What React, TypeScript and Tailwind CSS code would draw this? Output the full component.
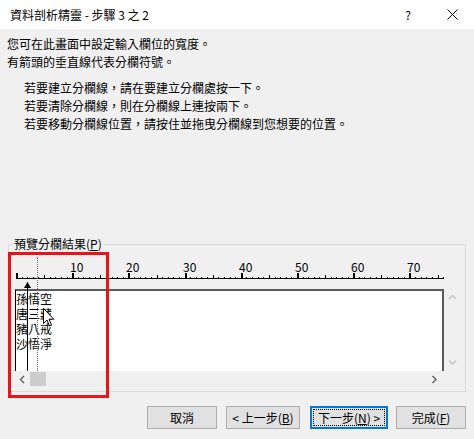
import React from 'react';

const FONT = { fontFamily: '"Noto Sans CJK TC", "Noto Sans", sans-serif' };

function Ruler() {
    const cols = Array.from({ length: 77 }, (_, i) => i);
    const px = (c: number) => Math.round(1 + c * 5.62);
    return (
        <svg width="432" height="31" className="block" style={FONT}>
            <line x1="1" y1="20.5" x2="429" y2="20.5" stroke="#000" strokeWidth="1" />
            {cols.map((c) => {
                const x = px(c);
                if (c % 10 === 0) return <rect key={c} x={x} y={15} width={2} height={5} fill="#000" />;
                if (c % 5 === 0) return <rect key={c} x={x} y={17} width={1} height={3} fill="#000" />;
                return <rect key={c} x={x} y={19} width={1} height={1} fill="#000" />;
            })}
            {[10, 20, 30, 40, 50, 60, 70].map((n) => (
                <text key={n} x={px(n) - 2} y={14} fontSize="12" fill="#000">
                    {n}
                </text>
            ))}
        </svg>
    );
}

function Chevron({ dir, color }: { dir: 'up' | 'down' | 'left' | 'right'; color: string }) {
    const pts = {
        up: '1,5 4.5,1.5 8,5',
        down: '1,1.5 4.5,5 8,1.5',
        left: '5,1 1.5,4.5 5,8',
        right: '1.5,1 5,4.5 1.5,8',
    }[dir];
    const w = dir === 'up' || dir === 'down' ? 9 : 7;
    const h = dir === 'up' || dir === 'down' ? 7 : 9;
    return (
        <svg width={w} height={h}>
            <polyline points={pts} fill="none" stroke={color} strokeWidth="1.4" />
        </svg>
    );
}

function Cursor() {
    return (
        <svg width="12" height="19" viewBox="0 0 12 19">
            <path d="M0.5 0.5 L0.5 15.5 L4 12 L6.5 18 L8.5 17 L6 11.2 L10.8 11.2 Z" fill="#fff" stroke="#000" strokeWidth="1" />
        </svg>
    );
}

function Btn({ children, w, primary }: { children: React.ReactNode; w: string; primary?: boolean }) {
    if (primary) {
        return (
            <div className={`${w} h-[23px] border-2 border-[#0078d7] bg-[#e1e1e1] p-[1px]`}>
                <div className="h-full w-full border border-dotted border-[#000] flex items-center justify-center text-[12px] leading-none">
                    {children}
                </div>
            </div>
        );
    }
    return (
        <div className={`${w} h-[23px] border border-[#adadad] bg-[#e1e1e1] flex items-center justify-center text-[12px] leading-none`}>
            {children}
        </div>
    );
}

export default function App() {
    const names = ['孫悟空', '唐三藏', '豬八戒', '沙悟淨'];
    return (
        <div className="relative w-[474px] h-[439px] bg-[#f0f0f0] text-black overflow-hidden" style={FONT}>
            {/* title bar */}
            <div className="h-[29px] bg-white flex items-center pl-[10px] text-[12px]">
                <span className="flex-1">資料剖析精靈 - 步驟 3 之 2</span>
                <span className="w-[10px] text-center mr-[34px]">?</span>
                <svg width="11" height="11" className="mr-[16px]">
                    <line x1="0.5" y1="0.5" x2="10.5" y2="10.5" stroke="#000" strokeWidth="1" />
                    <line x1="10.5" y1="0.5" x2="0.5" y2="10.5" stroke="#000" strokeWidth="1" />
                </svg>
            </div>

            {/* instructions */}
            <div className="pt-[6px] pl-[7px] text-[12px] leading-[18px]">
                <p>您可在此畫面中設定輸入欄位的寬度。</p>
                <p>有箭頭的垂直線代表分欄符號。</p>
                <div className="mt-[8px] pl-[17px]">
                    <p>若要建立分欄線，請在要建立分欄處按一下。</p>
                    <p>若要清除分欄線，則在分欄線上連按兩下。</p>
                    <p>若要移動分欄線位置，請按住並拖曳分欄線到您想要的位置。</p>
                </div>
            </div>

            {/* preview group */}
            <div className="relative mt-[111px] ml-[8px] w-[458px] h-[148px] border border-[#dcdcdc]">
                <span className="absolute left-[4px] top-[-10px] px-[1px] bg-[#f0f0f0] text-[12px] leading-[18px]">
                    預覽分欄結果(<span className="underline">P</span>)
                </span>
                <div className="relative pt-[13px] pl-[6px]">
                    <Ruler />
                    <div className="flex h-[82px]">
                        <div className="w-[429px] h-full bg-white border-t-2 border-r-2 border-l border-t-[#5a5a5a] border-r-[#5a5a5a] border-l-black text-[12px] leading-[15px]">
                            {names.map((n) => (
                                <div key={n}>{n}</div>
                            ))}
                        </div>
                        <div className="w-[17px] h-full flex flex-col items-center justify-between py-[5px]">
                            <Chevron dir="up" color="#c4c4c4" />
                            <Chevron dir="down" color="#c4c4c4" />
                        </div>
                    </div>
                    <div className="w-[429px] h-[16px] flex items-center">
                        <div className="w-[15px] flex justify-center">
                            <Chevron dir="left" color="#606060" />
                        </div>
                        <div className="w-[16px] h-[14px] bg-[#cdcdcd]" />
                        <div className="flex-1" />
                        <div className="w-[15px] flex justify-center mr-[2px]">
                            <Chevron dir="right" color="#606060" />
                        </div>
                    </div>

                    {/* column break lines */}
                    <div className="absolute left-[18px] top-[37px] w-[1px] h-[89px] bg-black" />
                    <svg width="7" height="6" className="absolute left-[15px] top-[37px]">
                        <polygon points="3.5,0 7,6 0,6" fill="#000" />
                    </svg>
                    <div className="absolute left-[28px] top-[12px] h-[114px] border-l border-dotted border-[#707070]" />
                    <div className="absolute left-[34px] top-[63px]">
                        <Cursor />
                    </div>
                </div>
            </div>

            {/* buttons */}
            <div className="mt-[14px] flex justify-end pr-[8px]">
                <Btn w="w-[70px]">取消</Btn>
                <div className="w-[9px]" />
                <Btn w="w-[74px]">
                    &lt; 上一步(<span className="underline">B</span>)
                </Btn>
                <div className="w-[10px]" />
                <Btn w="w-[78px]" primary>
                    下一步(<span className="underline">N</span>) &gt;
                </Btn>
                <div className="w-[8px]" />
                <Btn w="w-[70px]">
                    完成(<span className="underline">F</span>)
                </Btn>
            </div>

            {/* highlight */}
            <div className="absolute left-[8px] top-[252px] w-[101px] h-[146px] border-[3px] border-[#e8141a]" />
        </div>
    );
}
